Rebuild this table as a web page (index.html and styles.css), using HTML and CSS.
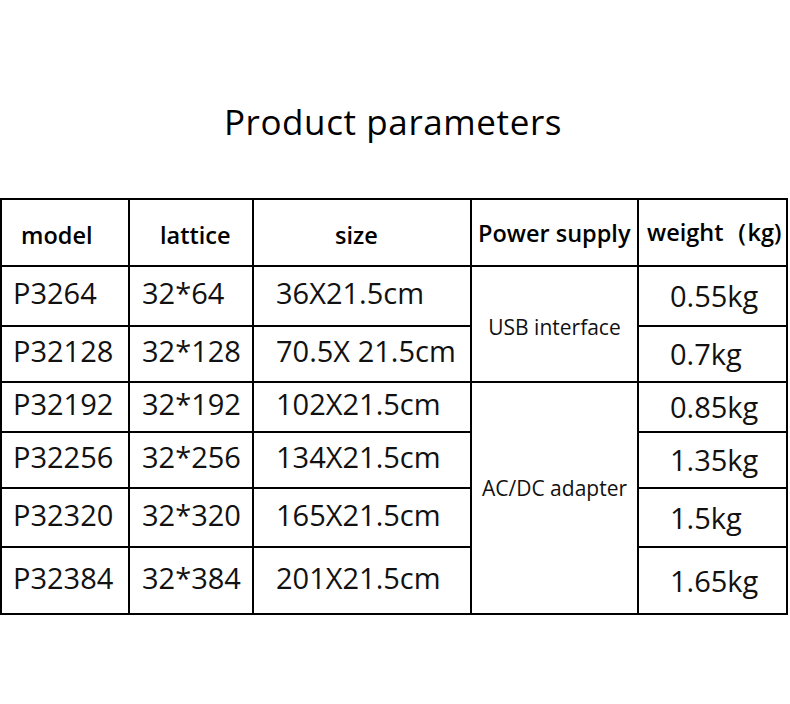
FILE: index.html
```html
<!DOCTYPE html>
<html>
<head>
<meta charset="utf-8">
<link rel="stylesheet" href="styles.css">
</head>
<body>
<div class="page">
  <h1 class="title">Product parameters</h1>
  <table class="params">
    <colgroup>
      <col class="c-model">
      <col class="c-lattice">
      <col class="c-size">
      <col class="c-power">
      <col class="c-weight">
    </colgroup>
    <tr class="r-head">
      <th class="h-model">model</th>
      <th class="h-lattice">lattice</th>
      <th class="h-size">size</th>
      <th class="h-power">Power supply</th>
      <th class="h-weight">weight（kg)</th>
    </tr>
    <tr class="r1">
      <td class="model">P3264</td>
      <td class="lattice">32*64</td>
      <td class="size">36X21.5cm</td>
      <td class="power usb" rowspan="2">USB interface</td>
      <td class="weight">0.55kg</td>
    </tr>
    <tr class="r2">
      <td class="model">P32128</td>
      <td class="lattice">32*128</td>
      <td class="size">70.5X 21.5cm</td>
      <td class="weight">0.7kg</td>
    </tr>
    <tr class="r3">
      <td class="model">P32192</td>
      <td class="lattice">32*192</td>
      <td class="size">102X21.5cm</td>
      <td class="power ac" rowspan="4">AC/DC adapter</td>
      <td class="weight">0.85kg</td>
    </tr>
    <tr class="r4">
      <td class="model">P32256</td>
      <td class="lattice">32*256</td>
      <td class="size">134X21.5cm</td>
      <td class="weight">1.35kg</td>
    </tr>
    <tr class="r5">
      <td class="model">P32320</td>
      <td class="lattice">32*320</td>
      <td class="size">165X21.5cm</td>
      <td class="weight">1.5kg</td>
    </tr>
    <tr class="r6">
      <td class="model">P32384</td>
      <td class="lattice">32*384</td>
      <td class="size">201X21.5cm</td>
      <td class="weight">1.65kg</td>
    </tr>
  </table>
</div>
</body>
</html>
```

FILE: styles.css
```css
html, body {
  margin: 0;
  padding: 0;
  background: #fff;
}
body {
  font-family: "Open Sans", "Noto Sans", "DejaVu Sans", sans-serif;
  color: #111;
}
.page {
  width: 790px;
  height: 704px;
  padding-top: 100px;
  box-sizing: border-box;
}
.title {
  margin: 0;
  text-align: center;
  font-size: 35px;
  font-weight: 400;
  line-height: 44px;
  letter-spacing: 0.6px;
  padding-right: 4px;
  color: #000;
}
.params {
  margin-top: 54px;
  border-collapse: collapse;
  table-layout: fixed;
  width: 786px;
}
.params th,
.params td {
  border: 2px solid #000;
  padding: 0;
  vertical-align: middle;
  white-space: nowrap;
}
.c-model { width: 128px; }
.c-lattice { width: 124px; }
.c-size { width: 218px; }
.c-power { width: 167px; }
.c-weight { width: 149px; }

.r-head { height: 67px; }
.r1 { height: 60px; }
.r2 { height: 56px; }
.r3 { height: 50px; }
.r4 { height: 56px; }
.r5 { height: 59px; }
.r6 { height: 67px; }

.params th {
  font-size: 23.5px;
  font-weight: 600;
  text-align: left;
  color: #000;
}
.params th.h-model { padding-left: 19px; padding-top: 4px; }
.params th.h-lattice { padding-left: 30px; padding-top: 4px; }
.params th.h-size { padding-left: 81px; padding-top: 4px; }
.params th.h-power { padding-left: 6px; }
.params th.h-weight { padding-left: 8px; overflow: visible; }

.params td {
  font-size: 29px;
  line-height: 36px;
  font-weight: 400;
}
.params td.model { padding-left: 11px; padding-bottom: 6px; }
.params td.lattice { padding-left: 12px; padding-bottom: 6px; }
.params td.size { padding-left: 22px; padding-bottom: 6px; }
.params td.weight { padding-left: 31px; }
.params td.power {
  font-size: 21px;
  text-align: center;
  line-height: 28px;
}
.params td.usb { padding-top: 6px; }
.params td.ac { padding-bottom: 20px; }
```
